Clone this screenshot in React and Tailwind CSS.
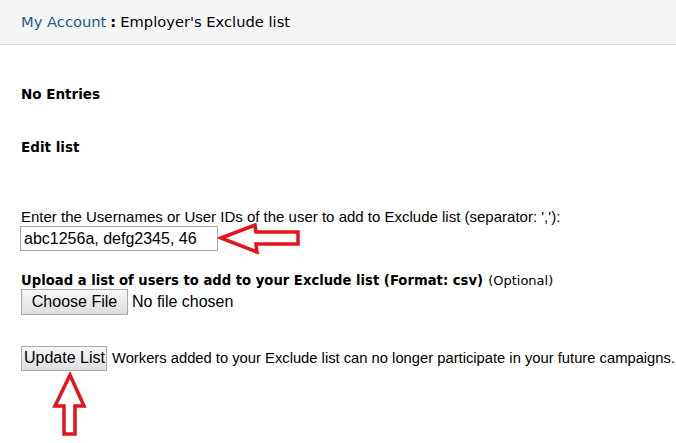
import React from 'react';

const verdana = { fontFamily: '"DejaVu Sans", Verdana, sans-serif' };
const arial = { fontFamily: '"Liberation Sans", Arial, sans-serif' };

// Red outline arrow pointing left, drawn beside the usernames field
const LeftArrow = () => (
    <svg width="84" height="32" viewBox="0 0 84 32" className="block">
        <polygon
            points="3,15 37,2 38,9 80,9 80,21 38,21 39,29"
            fill="none"
            stroke="#e3141c"
            strokeWidth="3.5"
            strokeLinejoin="miter"
        />
    </svg>
);

// Red outline arrow pointing up, drawn under the Update List button
const UpArrow = () => (
    <svg width="36" height="66" viewBox="0 0 36 66" className="block">
        <polygon
            points="18,3 32,34 23,34 23,62 12,62 12,34 3,34"
            fill="none"
            stroke="#e3141c"
            strokeWidth="3.5"
        />
    </svg>
);

const Button = ({ children, className = '' }) => (
    <button
        className={`border border-[#a9a9a9] bg-gradient-to-b from-[#f6f6f6] to-[#dedede] text-black text-[16px] leading-none px-[2px] whitespace-nowrap shrink-0 ${className}`}
        style={arial}
    >
        {children}
    </button>
);

export default function App() {
    return (
        <div className="w-[676px] h-[443px] bg-white text-black overflow-hidden">
            {/* Breadcrumb header */}
            <div className="h-[45px] bg-[#f5f5f5] border-b border-[#dddddd] flex items-center px-[21px] text-[14.7px]" style={verdana}>
                <span className="text-[#1b5d8f]">My Account</span>
                <span className="font-bold mx-[4px]">:</span>
                <span>Employer's Exclude list</span>
            </div>

            <div className="px-[21px]">
                <div className="mt-[39px] text-[13.5px] font-bold" style={verdana}>No Entries</div>
                <div className="mt-[33px] text-[13.5px] font-bold" style={verdana}>Edit list</div>

                {/* Add users by name / id */}
                <div className="mt-[51px] text-[15px] leading-[16px]" style={arial}>
                    Enter the Usernames or User IDs of the user to add to Exclude list (separator: ',')<span>:</span>
                </div>
                <div className="flex items-center -ml-[1px] -mt-[2px]">
                    <input
                        type="text"
                        defaultValue="abc1256a, defg2345, 46"
                        className="w-[198px] h-[25px] border border-[#a9a9a9] px-[3px] text-[16px] outline-none"
                        style={arial}
                    />
                    <LeftArrow />
                </div>

                {/* CSV upload */}
                <div className="mt-[16px] leading-[18px]" style={verdana}>
                    <span className="font-bold text-[13.2px]">Upload a list of users to add to your Exclude list (Format: csv)</span>{' '}
                    <span className="text-[13px]">(Optional)</span>
                </div>
                <div className="flex items-center gap-[4px] -mt-[1px]">
                    <Button className="h-[26px] w-[107px]">Choose File</Button>
                    <span className="text-[16px]" style={arial}>No file chosen</span>
                </div>

                {/* Submit */}
                <div className="flex items-center gap-[5px] mt-[31px]">
                    <Button className="h-[25px] w-[86px]">Update List</Button>
                    <span className="text-[14.75px] whitespace-nowrap" style={arial}>
                        Workers added to your Exclude list can no longer participate in your future campaigns.
                    </span>
                </div>
                <div className="ml-[31px] mt-[1px]">
                    <UpArrow />
                </div>
            </div>
        </div>
    );
}
